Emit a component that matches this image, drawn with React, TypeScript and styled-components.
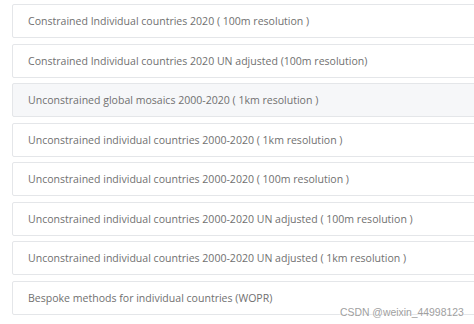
import styled, { createGlobalStyle } from "styled-components";

const GlobalStyle = createGlobalStyle`
  html, body {
    margin: 0;
    padding: 0;
    background: #ffffff;
  }
  body {
    font-family: "Open Sans", "Noto Sans", sans-serif;
    overflow: hidden;
  }
`;

const Page = styled.div`
  position: relative;
  width: 474px;
  height: 324px;
  overflow: hidden;
  padding: 4px 0 0 12px;
  box-sizing: border-box;
`;

const List = styled.ul`
  list-style: none;
  margin: 0;
  padding: 0;
  width: 480px;
  display: flex;
  flex-direction: column;
  gap: 5.5px;
`;

const Item = styled.li<{ $active?: boolean }>`
  box-sizing: border-box;
  height: 34px;
  display: flex;
  align-items: center;
  padding-left: 15px;
  border: 1px solid #e4e6e9;
  border-radius: 2px;
  background: ${(p) => (p.$active ? "#f6f7f9" : "#ffffff")};
  color: #707070;
  font-size: 10.55px;
  white-space: nowrap;
`;

const Watermark = styled.span`
  position: absolute;
  left: 340px;
  top: 307px;
  font-family: "Liberation Sans", Arial, sans-serif;
  font-size: 10.4px;
  color: #a0a0a0;
  text-shadow: 0 0 2px #ffffff, 0 0 2px #ffffff;
`;

const items = [
  "Constrained Individual countries 2020 ( 100m resolution )",
  "Constrained Individual countries 2020 UN adjusted (100m resolution)",
  "Unconstrained global mosaics 2000-2020 ( 1km resolution )",
  "Unconstrained individual countries 2000-2020 ( 1km resolution )",
  "Unconstrained individual countries 2000-2020 ( 100m resolution )",
  "Unconstrained individual countries 2000-2020 UN adjusted ( 100m resolution )",
  "Unconstrained individual countries 2000-2020 UN adjusted ( 1km resolution )",
  "Bespoke methods for individual countries (WOPR)",
];

export default function App() {
  return (
    <Page>
      <GlobalStyle />
      <List>
        {items.map((text, i) => (
          <Item key={text} $active={i === 2}>
            {text}
          </Item>
        ))}
      </List>
      <Watermark>CSDN @weixin_44998123</Watermark>
    </Page>
  );
}
